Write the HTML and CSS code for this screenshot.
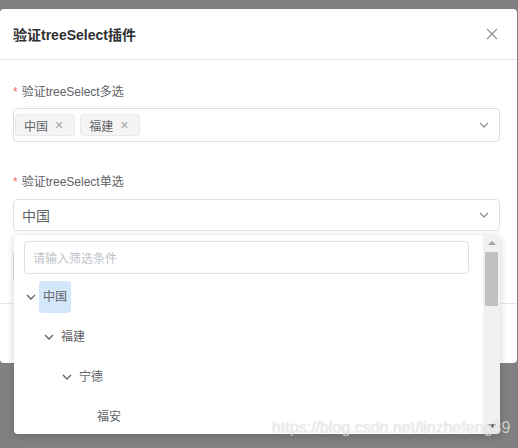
FILE: index.html
```html
<!DOCTYPE html>
<html lang="zh">
<head>
<meta charset="utf-8">
<title>验证treeSelect插件</title>
<link rel="stylesheet" href="styles.css">
</head>
<body>
<div class="dialog">
  <div class="header">
    <span class="title">验证treeSelect插件</span>
    <svg class="close" width="12" height="12" viewBox="0 0 12 12"><path d="M1 1L11 11M11 1L1 11" stroke="#909399" stroke-width="1.2" fill="none"/></svg>
  </div>
  <div class="body">
    <div class="label"><span class="star">*</span>验证treeSelect多选</div>
    <div class="select multi">
      <span class="tag">中国<span class="tag-x">×</span></span>
      <span class="tag">福建<span class="tag-x">×</span></span>
      <svg class="arrow" width="10" height="6" viewBox="0 0 10 6"><path d="M1 1L5 5L9 1" stroke="#909399" stroke-width="1.3" fill="none"/></svg>
    </div>
    <div class="label second"><span class="star">*</span>验证treeSelect单选</div>
    <div class="select single">
      <span class="value">中国</span>
      <svg class="arrow" width="10" height="6" viewBox="0 0 10 6"><path d="M1 1L5 5L9 1" stroke="#909399" stroke-width="1.3" fill="none"/></svg>
    </div>
    <div class="select hidden-field"></div>
  </div>
  <div class="footer"></div>
</div>

<div class="dropdown">
  <div class="dd-content">
    <div class="search">请输入筛选条件</div>
    <div class="node lvl0">
      <svg class="chev" width="14" height="8" viewBox="0 0 14 8"><path d="M3 2L7 6L11 2" stroke="#606266" stroke-width="1.3" fill="none"/></svg>
      <span class="node-label active">中国</span>
    </div>
    <div class="node lvl1">
      <svg class="chev" width="14" height="8" viewBox="0 0 14 8"><path d="M3 2L7 6L11 2" stroke="#606266" stroke-width="1.3" fill="none"/></svg>
      <span class="node-label">福建</span>
    </div>
    <div class="node lvl2">
      <svg class="chev" width="14" height="8" viewBox="0 0 14 8"><path d="M3 2L7 6L11 2" stroke="#606266" stroke-width="1.3" fill="none"/></svg>
      <span class="node-label">宁德</span>
    </div>
    <div class="node lvl3">
      <span class="chev-space"></span>
      <span class="node-label">福安</span>
    </div>
  </div>
  <div class="scrollbar">
    <div class="sb-up"></div>
    <div class="sb-thumb"></div>
    <div class="sb-fill"></div>
    <div class="sb-down"></div>
  </div>
</div>

<div class="watermark">https://blog.csdn.net/linzhefeng89</div>
</body>
</html>
```

FILE: styles.css
```css
* { box-sizing: border-box; }
html, body {
  margin: 0;
  padding: 0;
}
body {
  width: 518px;
  height: 448px;
  background: #808080;
  font-family: "Liberation Sans", "Noto Sans CJK SC", sans-serif;
  overflow: hidden;
  position: relative;
  padding-top: 9px;
}
.dialog {
  width: 517px;
  height: 354px;
  background: #fff;
  border-radius: 4px;
  display: flex;
  flex-direction: column;
}
.header {
  height: 51px;
  padding: 0 19px 0 13px;
  display: flex;
  align-items: center;
  justify-content: space-between;
  border-bottom: 1px solid #e8e8e8;
}
.title {
  font-size: 14px;
  font-weight: bold;
  color: #303133;
}
.close { display: block; }
.body {
  padding: 22px 17px 0 13px;
  flex: 1;
}
.label {
  height: 20px;
  line-height: 20px;
  font-size: 12px;
  color: #606266;
  display: flex;
  align-items: center;
}
.star {
  color: #f56c6c;
  margin-right: 4px;
  font-size: 12px;
}
.label.second { margin-top: 30px; }
.select {
  border: 1px solid #dcdfe6;
  border-radius: 4px;
  display: flex;
  align-items: center;
  position: relative;
}
.multi {
  margin-top: 6px;
  height: 34px;
  padding: 0 2px 0 1px;
  gap: 5px;
}
.single {
  margin-top: 7px;
  height: 32px;
  padding-left: 8px;
}
.hidden-field {
  margin-top: 20px;
  height: 33px;
}
.footer {
  height: 60px;
  border-top: 1px solid #e8e8e8;
}
.value {
  font-size: 14px;
  color: #606266;
}
.tag {
  height: 22px;
  display: inline-flex;
  align-items: center;
  padding: 0 11px 0 8px;
  background: #f4f4f5;
  border: 1px solid #e9e9eb;
  border-radius: 3px;
  font-size: 12px;
  color: #606266;
}
.tag-x {
  margin-left: 7px;
  color: #a0a3a9;
  font-size: 14px;
  line-height: 1;
}
.arrow {
  position: absolute;
  right: 10px;
  top: 50%;
  margin-top: -3px;
}
.dropdown {
  position: absolute;
  left: 14px;
  top: 235px;
  width: 486px;
  height: 199px;
  background: #fff;
  border-radius: 4px;
  box-shadow: 0 2px 8px rgba(0,0,0,0.18);
  display: flex;
  overflow: hidden;
}
.dd-content {
  flex: 1;
  padding: 6px 14px 0 10px;
}
.search {
  height: 33px;
  border: 1px solid #dcdfe6;
  border-radius: 4px;
  padding-left: 8px;
  display: flex;
  align-items: center;
  font-size: 12px;
  color: #c0c4cc;
  margin-bottom: 3px;
}
.node {
  height: 40px;
  display: flex;
  align-items: center;
  font-size: 12px;
  color: #606266;
}
.lvl1 { padding-left: 18px; }
.lvl2 { padding-left: 36px; }
.lvl3 { padding-left: 54px; }
.chev, .chev-space {
  display: block;
  width: 14px;
  flex: none;
}
.chev-space { height: 8px; }
.node-label {
  margin-left: 1px;
  padding: 0 4px;
  height: 32px;
  line-height: 32px;
  border-radius: 3px;
}
.node-label.active { background: #d5e7fb; }
.scrollbar {
  width: 17px;
  background: #f1f1f1;
  display: flex;
  flex-direction: column;
  align-items: center;
}
.sb-up {
  margin-top: 6px;
  width: 0;
  height: 0;
  border-left: 4px solid transparent;
  border-right: 4px solid transparent;
  border-bottom: 4px solid #a3a3a3;
}
.sb-thumb {
  margin-top: 7px;
  width: 13px;
  height: 54px;
  background: #c1c1c1;
}
.sb-fill { flex: 1; }
.sb-down {
  margin-bottom: 6px;
  width: 0;
  height: 0;
  border-left: 4px solid transparent;
  border-right: 4px solid transparent;
  border-top: 4px solid #505050;
}
.watermark {
  position: absolute;
  left: 272px;
  top: 419px;
  font-size: 16px;
  color: rgba(255,255,255,0.7);
  text-shadow: 0 0 1px rgba(0,0,0,0.25);
  font-family: "Liberation Sans", sans-serif;
  white-space: nowrap;
}
```
